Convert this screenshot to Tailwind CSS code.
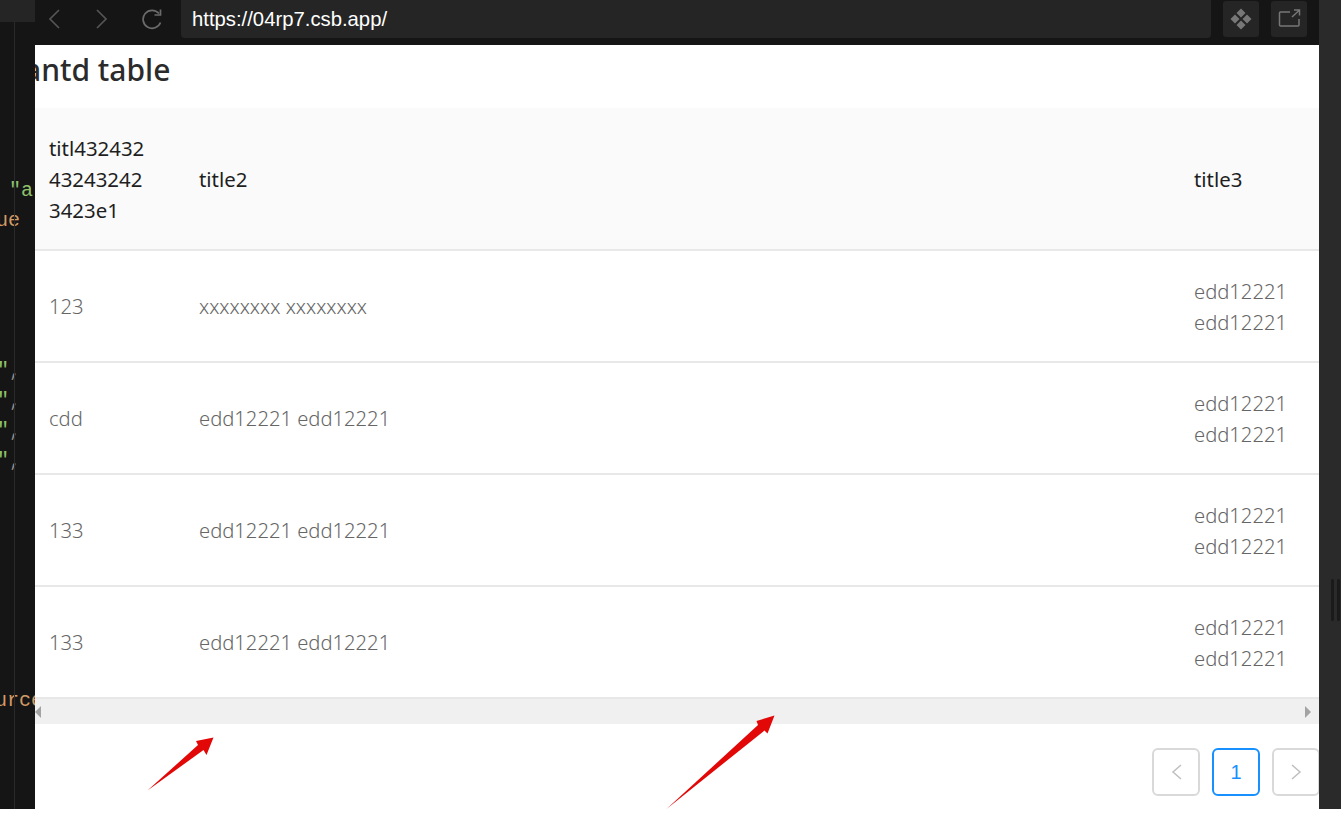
<!DOCTYPE html>
<html lang="en">
<head>
    <meta charset="UTF-8">
    <title>antd table</title>
    <script src="https://cdn.jsdelivr.net/npm/@tailwindcss/browser@4"></script>
</head>
<body class="bg-white h-[813px] overflow-hidden relative font-['Noto_Sans',sans-serif]">
    <div class="flex h-[809px]">
        <!-- editor behind the preview -->
        <div class="w-[35px] shrink-0 bg-[#151515] relative overflow-hidden font-['Liberation_Mono',monospace] text-[20px] whitespace-nowrap">
            <div class="h-[22px] bg-[#252525]"></div>
            <div class="absolute left-[14px] top-[22px] bottom-0 w-px bg-[#2a2a2a]"></div>
            <div class="pt-[154px] leading-[30px]">
                <div class="h-[30px] pl-[9px] text-[#8fc26b]">"a</div>
                <div class="h-[30px] -ml-[4px] text-[#d19a66]">ue</div>
                <div class="h-[120px]"></div>
                <div class="h-[30px] -ml-[3px] text-[#8fc26b]">"<span class="text-[#8a8a8a]">,</span></div>
                <div class="h-[30px] -ml-[3px] text-[#8fc26b]">"<span class="text-[#8a8a8a]">,</span></div>
                <div class="h-[30px] -ml-[3px] text-[#8fc26b]">"<span class="text-[#8a8a8a]">,</span></div>
                <div class="h-[30px] -ml-[3px] text-[#8fc26b]">"<span class="text-[#8a8a8a]">,</span></div>
                <div class="h-[210px]"></div>
                <div class="h-[30px] -ml-[5px] text-[#d19a66]">urce</div>
            </div>
        </div>

        <!-- preview -->
        <div class="flex-1 min-w-0 flex flex-col">
            <div class="h-[45px] shrink-0 bg-[#151515] flex items-start">
                <div class="flex items-center h-[38px] w-[146px] shrink-0 pl-[13px] gap-[36px]">
                    <svg class="w-[12px] h-[20px]" viewBox="0 0 12 20" fill="none" stroke="#555" stroke-width="1.7"><path d="M11 1 2 10l9 9"/></svg>
                    <svg class="w-[12px] h-[20px]" viewBox="0 0 12 20" fill="none" stroke="#555" stroke-width="1.7"><path d="m1 1 9 9-9 9"/></svg>
                    <svg class="w-[22px] h-[22px] -ml-[3px]" viewBox="0 0 22 22" fill="none" stroke="#6b6b6b" stroke-width="1.7"><path d="M19.500 14.500A9 9 0 1 1 18 5.500"/><path d="M19.500 1.500v5.500h-6"/></svg>
                </div>
                <div class="w-[1030px] h-[38px] shrink-0 bg-[#252525] rounded-b-[4px] pl-[11px] flex items-center text-white text-[20.300px] font-['Liberation_Sans',sans-serif]">https://04rp7.csb.app/</div>
                <div class="ml-[12px] mt-px w-[36px] h-[36px] rounded-[3px] bg-[#252525] flex items-center justify-center">
                    <svg class="w-[24px] h-[24px]" viewBox="0 0 24 24" fill="#777"><path d="m12 1.500 4.500 4.500-4.500 4.500L7.500 6zM6 7.500l4.500 4.500L6 16.500 1.500 12zM18 7.500l4.500 4.500-4.500 4.500-4.500-4.500zM12 13.500l4.500 4.500-4.500 4.500L7.500 18z"/></svg>
                </div>
                <div class="ml-[12px] mt-px w-[36px] h-[36px] rounded-[3px] bg-[#252525] flex items-center justify-center">
                    <svg class="w-[24px] h-[22px]" viewBox="0 0 24 22" fill="none" stroke="#777" stroke-width="1.5"><path d="M13 4H3.500a1 1 0 0 0-1 1v12a1 1 0 0 0 1 1H21a1 1 0 0 0 1-1v-6"/><path d="M15 9l7-6.500M17 2h5.500v5.500"/></svg>
                </div>
            </div>

            <div class="flex-1 min-h-0 bg-white overflow-hidden flex flex-col">
                <h1 class="h-[63px] shrink-0 -ml-[11px] flex items-center pb-[15px] text-[30px] font-medium text-[#2b2b2b] whitespace-nowrap">antd table</h1>

                <div class="grid grid-cols-[150px_995px_1fr] items-center h-[143px] pl-[14px] pt-[2px] bg-[#fafafa] border-b-2 border-[#e8e8e8] text-[20.400px] leading-[31px] text-[#1f1f1f]">
                    <div>titl432432<br>43243242<br>3423e1</div>
                    <div>title2</div>
                    <div>title3</div>
                </div>
                <div class="grid grid-cols-[150px_995px_1fr] items-center h-[112px] pl-[14px] border-b-2 border-[#e8e8e8] text-[20.200px] font-light leading-[31px] text-[#666666]">
                    <div>123</div>
                    <div>xxxxxxxx xxxxxxxx</div>
                    <div class="pt-px">edd12221<br>edd12221</div>
                </div>
                <div class="grid grid-cols-[150px_995px_1fr] items-center h-[112px] pl-[14px] border-b-2 border-[#e8e8e8] text-[20.200px] font-light leading-[31px] text-[#666666]">
                    <div>cdd</div>
                    <div>edd12221 edd12221</div>
                    <div class="pt-px">edd12221<br>edd12221</div>
                </div>
                <div class="grid grid-cols-[150px_995px_1fr] items-center h-[112px] pl-[14px] border-b-2 border-[#e8e8e8] text-[20.200px] font-light leading-[31px] text-[#666666]">
                    <div>133</div>
                    <div>edd12221 edd12221</div>
                    <div class="pt-px">edd12221<br>edd12221</div>
                </div>
                <div class="grid grid-cols-[150px_995px_1fr] items-center h-[112px] pl-[14px] border-b-2 border-[#e8e8e8] text-[20.200px] font-light leading-[31px] text-[#666666]">
                    <div>133</div>
                    <div>edd12221 edd12221</div>
                    <div class="pt-px">edd12221<br>edd12221</div>
                </div>

                <!-- horizontal scrollbar -->
                <div class="h-[25px] shrink-0 bg-[#f0f0f0] flex items-center justify-between pr-[8px]">
                    <svg class="w-[6px] h-[12px]" viewBox="0 0 6 12" fill="#a3a3a3"><path d="M6 0v12L0 6z"/></svg>
                    <svg class="w-[6px] h-[12px]" viewBox="0 0 6 12" fill="#a3a3a3"><path d="M0 0v12l6-6z"/></svg>
                </div>

                <!-- pagination -->
                <div class="flex justify-end gap-[12px] mt-[24px] -mr-px">
                    <div class="w-[48px] h-[48px] border-2 border-[#d9d9d9] rounded-[6px] flex items-center justify-center">
                        <svg class="w-[11px] h-[16px]" viewBox="0 0 11 16" fill="none" stroke="#bfbfbf" stroke-width="1.5"><path d="M10 1 2 8l8 7"/></svg>
                    </div>
                    <div class="w-[48px] h-[48px] border-2 border-[#1890ff] rounded-[6px] flex items-center justify-center text-[#1890ff] text-[20px] font-['Liberation_Sans',sans-serif]">1</div>
                    <div class="w-[48px] h-[48px] border-2 border-[#d9d9d9] rounded-[6px] flex items-center justify-center">
                        <svg class="w-[11px] h-[16px]" viewBox="0 0 11 16" fill="none" stroke="#bfbfbf" stroke-width="1.5"><path d="m1 1 8 7-8 7"/></svg>
                    </div>
                </div>
            </div>
        </div>

        <!-- right strip with the resize handle -->
        <div class="w-[22px] shrink-0 bg-[#2a2a2a] flex items-center justify-end gap-[3px] pr-[1px] pt-[390px]">
            <div class="w-[3px] h-[42px] rounded-sm bg-[#1a1a1a]"></div>
            <div class="w-[3px] h-[42px] rounded-sm bg-[#1a1a1a]"></div>
        </div>
    </div>

    <!-- red annotation arrows drawn over the screenshot -->
    <svg class="absolute inset-0 w-[1341px] h-[813px] pointer-events-none" viewBox="0 0 1341 813" fill="#e30808">
        <path d="M147.500 790.500 198 745 196 741 213.500 737.500 206.500 755 203.500 750z"/>
        <path d="M666.500 809 758 725 756.500 721 774.500 715.500 767.500 733.500 764.500 730.500z"/>
    </svg>
</body>
</html>
